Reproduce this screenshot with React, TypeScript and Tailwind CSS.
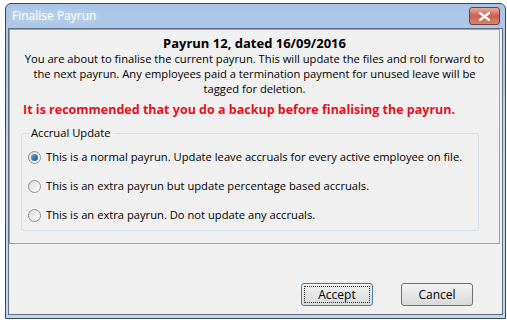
import { useState } from 'react';

const OPTIONS = [
  'This is a normal payrun. Update leave accruals for every active employee on file.',
  'This is an extra payrun but update percentage based accruals.',
  'This is an extra payrun. Do not update any accruals.',
];

function Radio({ checked }: { checked: boolean }) {
  return (
    <span className="flex h-[13px] w-[13px] shrink-0 items-center justify-center rounded-full border border-[#8f8f8f] bg-gradient-to-br from-[#dcdcdc] to-[#ffffff]">
      {checked && (
        <span className="h-[7px] w-[7px] rounded-full bg-gradient-to-br from-[#6fa8dc] to-[#1b4f8a]" />
      )}
    </span>
  );
}

export default function App() {
  const [choice, setChoice] = useState(0);

  return (
    <div
      className="h-[322px] w-[507px] overflow-hidden bg-white pl-[5px] pt-[3px] text-[12px] text-black"
      style={{ fontFamily: '"Open Sans", "Noto Sans", sans-serif' }}
    >
      {/* Window frame */}
      <div className="flex h-[316px] w-[501px] flex-col rounded-t-[6px] border border-[#3d4a57] bg-gradient-to-b from-[#a9c5e6] via-[#c3d7ee] to-[#bcd6ef]">
        {/* Title bar */}
        <div className="flex h-[24px] shrink-0 items-center justify-between pl-[6px] pr-[5px]">
          <span className="text-[12px] text-white [text-shadow:0_0_6px_rgba(255,255,255,0.9)]">
            Finalise Payrun
          </span>
          <button className="flex h-[18px] w-[31px] items-center justify-center rounded-[3px] border border-[#7a3a35] bg-gradient-to-b from-[#e8a99d] via-[#c9604f] to-[#d88372]">
            <svg width="11" height="9" viewBox="0 0 11 9">
              <path d="M1 1 L10 8 M10 1 L1 8" stroke="#ffffff" strokeWidth="2.4" strokeLinecap="square" />
            </svg>
          </button>
        </div>

        {/* Client area */}
        <div className="mx-[2px] mb-[3px] flex flex-1 flex-col border border-[#5f6f80] bg-[#f0f0f0]">
          <div className="mr-[2px] flex h-[215px] flex-col border border-[#a0a0a0] bg-[#f0f0f0]">
            <div className="mt-[5px] text-center text-[13px] font-bold leading-[16px]">
              Payrun 12, dated 16/09/2016
            </div>
            <p className="px-[10px] text-center text-[11.2px] leading-[15px]">
              You are about to finalise the current payrun. This will update the files and roll forward to the next payrun. Any employees paid a termination payment for unused leave will be tagged for deletion.
            </p>
            <div className="mt-[5px] pl-[13px] text-[12.5px] font-bold leading-[17px] text-[#e8101c]">
              It is recommended that you do a backup before finalising the payrun.
            </div>

            {/* Accrual group */}
            <div className="relative mx-[11px] mt-[15px] mr-[20px] h-[98px] rounded-[3px] border border-[#d5dfe5]">
              <span className="absolute -top-[9px] left-[7px] bg-[#f0f0f0] px-[2px] text-[11.2px] leading-[16px]">
                Accrual Update
              </span>
              <div className="flex flex-col gap-[13px] pl-[6px] pt-[15px]">
                {OPTIONS.map((o, i) => (
                  <label
                    key={i}
                    className="flex cursor-default items-center gap-[5px] text-[11.2px] leading-[16px]"
                    onClick={() => setChoice(i)}
                  >
                    <Radio checked={choice === i} />
                    <span>{o}</span>
                  </label>
                ))}
              </div>
            </div>
          </div>

          {/* Buttons */}
          <div className="mt-auto mb-[8px] flex justify-end gap-[28px] pr-[29px]">
            <button className="flex h-[23px] w-[72px] items-center justify-center rounded-[3px] border border-[#3c7fb1] bg-gradient-to-b from-[#f2f2f2] to-[#d9d9d9] p-[2px]">
              <span className="flex h-full w-full items-center justify-center border border-dotted border-[#333] text-[12px]">
                Accept
              </span>
            </button>
            <button className="flex h-[23px] w-[72px] items-center justify-center rounded-[3px] border border-[#707070] bg-gradient-to-b from-[#f2f2f2] to-[#d9d9d9] text-[12px]">
              Cancel
            </button>
          </div>
        </div>
      </div>
    </div>
  );
}
